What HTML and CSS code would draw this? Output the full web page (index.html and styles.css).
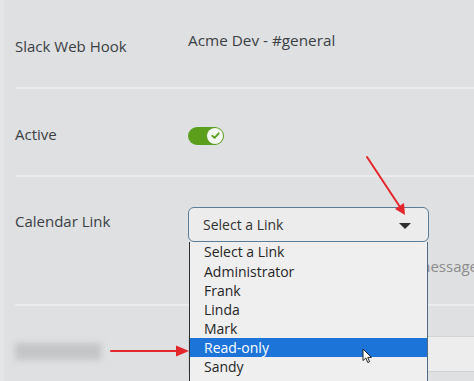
FILE: index.html
```html
<!DOCTYPE html>
<html lang="en">

<head>
  <meta charset="UTF-8">
  <title>Integration Settings</title>
  <link rel="stylesheet" href="styles.css">
</head>

<body>
  <div class="settings">

    <div class="row row-hook">
      <div class="label">Slack Web Hook</div>
      <div class="value">Acme Dev - #general</div>
    </div>

    <div class="row row-active">
      <div class="label">Active</div>
      <div class="value">
        <span class="toggle on">
          <span class="knob">
            <svg width="11" height="11" viewBox="0 0 12 12"><path d="M2.5 6.3 L5 8.6 L9.5 3.6" fill="none" stroke="#5b9f1c" stroke-width="2" stroke-linecap="round" stroke-linejoin="round"/></svg>
          </span>
        </span>
      </div>
    </div>

    <div class="row row-calendar">
      <div class="label">Calendar Link</div>
      <div class="value">
        <div class="select-wrap">
          <div class="select">
            <span>Select a Link</span>
            <span class="caret"></span>
          </div>
          <ul class="options">
            <li>Select a Link</li>
            <li>Administrator</li>
            <li>Frank</li>
            <li>Linda</li>
            <li>Mark</li>
            <li class="selected">Read-only</li>
            <li>Sandy</li>
          </ul>
        </div>
        <div class="help">Pick a link to include in the Slack message</div>
      </div>
    </div>

    <div class="row row-last">
      <div class="label"><span class="blurred"></span></div>
      <div class="value"><div class="input-box"></div></div>
    </div>

  </div>

  <!-- annotation arrows -->
  <svg class="annotations" width="474" height="381" viewBox="0 0 474 381">
    <g stroke="#e3262b" stroke-width="2" fill="none" stroke-linecap="round">
      <line x1="367" y1="157" x2="400" y2="207" />
      <line x1="111" y1="351" x2="178" y2="351" />
    </g>
    <g fill="#e3262b">
      <polygon points="405,215 395,209 404,203" />
      <polygon points="189,351 176,345.5 176,356.5" />
    </g>
  </svg>

  <svg class="cursor" width="12" height="16" viewBox="0 0 12 16">
    <path d="M1 1 L1 12.5 L3.8 10 L5.8 14.5 L7.6 13.7 L5.7 9.4 L9.4 9.4 Z" fill="#fff" stroke="#222" stroke-width="1" stroke-linejoin="round"/>
  </svg>
</body>

</html>
```

FILE: styles.css
```css
body {
  margin: 0;
  background-color: #dfe0e2;
  font-family: "Open Sans", "Noto Sans", sans-serif;
  color: #3a3f44;
  width: 474px;
  height: 381px;
  overflow: hidden;
  position: relative;
}

.settings {
  border-left: 4px solid #e4e5e6;
  height: 100%;
}

.row {
  display: grid;
  grid-template-columns: 173px 1fr;
  margin-left: 11px;
  border-bottom: 2px solid #ebebec;
  font-size: 15px;
}

.row-hook {
  height: 87px;
}

.row-hook .label {
  padding-top: 36px;
}

.row-hook .value {
  padding-top: 30px;
  font-size: 15.3px;
}

.row-active {
  height: 86px;
}

.row-active .label {
  padding-top: 35px;
}

.row-active .value {
  padding-top: 36px;
}

.row-calendar {
  height: 127px;
}

.row-calendar .label {
  padding-top: 34px;
}

.row-calendar .value {
  padding-top: 30px;
  min-width: 0;
}

.row-last {
  border-bottom: none;
  padding-top: 30px;
}

/* Toggle switch */
.toggle {
  display: inline-flex;
  align-items: center;
  justify-content: flex-end;
  width: 36px;
  height: 18px;
  border-radius: 9px;
  background-color: #5b9f1c;
  padding: 0 1px;
  box-sizing: border-box;
}

.knob {
  display: flex;
  align-items: center;
  justify-content: center;
  width: 16px;
  height: 16px;
  border-radius: 50%;
  background-color: #f4f6f2;
}

/* Select */
.select-wrap {
  position: relative;
  width: 241px;
}

.select {
  display: flex;
  justify-content: space-between;
  align-items: center;
  height: 35px;
  box-sizing: border-box;
  padding: 0 17px 0 14px;
  border: 1px solid #5d7c96;
  border-radius: 6px;
  background-color: #ececec;
  color: #333;
  font-size: 14px;
}

.caret {
  width: 0;
  height: 0;
  border-left: 6px solid transparent;
  border-right: 6px solid transparent;
  border-top: 6px solid #2f2f2f;
  margin-top: 2px;
}

.options {
  position: absolute;
  top: 35px;
  left: 1px;
  width: 239px;
  box-sizing: border-box;
  margin: 0;
  padding: 0;
  list-style: none;
  background-color: #efefef;
  border-left: 1px solid #2e3033;
  border-right: 1px solid #4f6a82;
  z-index: 10;
  color: #262626;
  font-size: 14px;
  height: 150px;
}

.options li {
  height: 19px;
  line-height: 19px;
  padding-left: 14px;
}

.options li:first-child {
  height: 20px;
}

.options li.selected {
  background-color: #1c74d9;
  color: #fff;
}

.help {
  margin-top: 14px;
  color: #8c8c8c;
  white-space: nowrap;
  overflow: hidden;
}

/* Last row */
.blurred {
  display: block;
  width: 86px;
  height: 17px;
  margin-top: 7px;
  background-color: #c4c5c6;
  filter: blur(3px);
}

.input-box {
  height: 34px;
  background-color: #ededee;
  border: 1px solid #d2d3d4;
  border-right: none;
}

/* Overlays */
.annotations {
  position: absolute;
  top: 0;
  left: 0;
  pointer-events: none;
  z-index: 20;
}

.cursor {
  position: absolute;
  left: 362px;
  top: 348px;
  z-index: 21;
}
```
